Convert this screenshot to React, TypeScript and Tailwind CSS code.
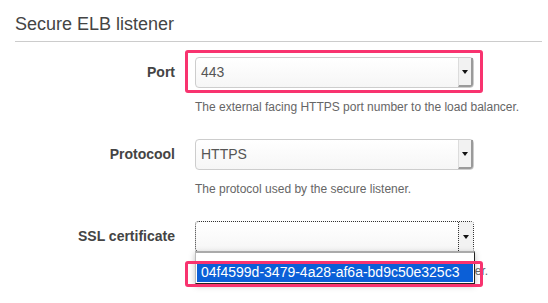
import React from 'react'

const font = { fontFamily: '"Liberation Sans", Arial, sans-serif' }

// small native-looking select box
function FakeSelect({ value, focused }: { value: string; focused?: boolean }) {
  return (
    <div
      className={
        'flex h-[31px] w-[279px] rounded-[4px] bg-gradient-to-b from-white to-[#f6f6f6] ' +
        (focused ? 'border border-dotted border-[#333]' : 'border border-[#cdcdcd]')
      }
    >
      <div className="flex flex-1 items-center pl-[5px] text-[14px] text-[#555]">{value}</div>
      <div
        className={
          'flex w-[15px] items-center justify-center bg-[#f2f2f2] ' +
          (focused
            ? 'border-l border-dotted border-[#333]'
            : 'border-l border-[#dcdcdc] border-r-2 border-b-2 border-r-[#9a9a9a] border-b-[#9a9a9a] rounded-br-[3px]')
        }
      >
        <div className="h-0 w-0 border-x-[3px] border-t-[4px] border-x-transparent border-t-[#111]" />
      </div>
    </div>
  )
}

function Field({ label, children, help }: { label: string; children: React.ReactNode; help: string }) {
  return (
    <div className="flex flex-col">
      <div className="flex items-center">
        <div className="w-[175px] text-right text-[14px] font-bold text-[#444]">{label}</div>
        <div className="relative ml-[20px]">{children}</div>
      </div>
      <div className="ml-[195px] mt-[11px] text-[12px] leading-[16px] text-[#666]">{help}</div>
    </div>
  )
}

export default function App() {
  return (
    <div className="relative h-[303px] w-[548px] overflow-hidden bg-white" style={font}>
      <div className="ml-[15px] mr-[6px] border-b border-[#cccccc] pb-[6px] pt-[13px]">
        <h2 className="text-[18px] leading-[22px] text-[#444]">Secure ELB listener</h2>
      </div>

      <div className="mt-[15px]">
        <Field label="Port" help="The external facing HTTPS port number to the load balancer.">
          <FakeSelect value="443" />
          <div className="pointer-events-none absolute -bottom-[5px] -left-[10px] -right-[9px] -top-[7px] rounded-[3px] border-[3px] border-[#f8336f]" />
        </Field>
      </div>

      <div className="mt-[24px]">
        <Field label="Protocool" help="The protocol used by the secure listener.">
          <FakeSelect value="HTTPS" />
        </Field>
      </div>

      <div className="mt-[24px]">
        <Field label="SSL certificate" help="The ID of the SSL certificate used by the load balancer.">
          <FakeSelect value="" focused />
          {/* open dropdown list, covers the help text */}
          <div className="absolute left-0 top-[30px] z-10 w-[280px] border-b border-l border-r border-t-2 border-b-[#222] border-l-[#bbb] border-r-[#222] border-t-[#aaa] bg-white px-[1px] pb-[1px] pt-[10px] shadow-[0_2px_6px_rgba(0,0,0,0.25)]">
            <div className="h-[19px] bg-[#0b5fd7] pl-[4px] text-[14px] leading-[19px] text-white">
              04f4599d-3479-4a28-af6a-bd9c50e325c3
            </div>
          </div>
          <div className="pointer-events-none absolute -left-[10px] top-[40px] z-20 h-[26px] w-[298px] rounded-[3px] border-[3px] border-[#f8336f]" />
        </Field>
      </div>
    </div>
  )
}
